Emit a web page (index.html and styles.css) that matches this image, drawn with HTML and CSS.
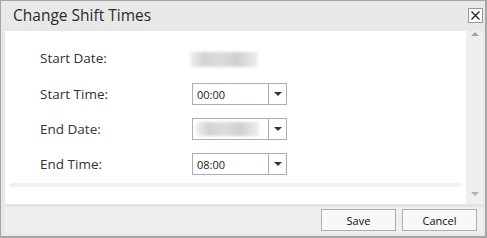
FILE: index.html
```html
<!DOCTYPE html>
<html lang="en">
<head>
    <meta charset="UTF-8">
    <title>Change Shift Times</title>
    <link rel="stylesheet" href="styles.css">
</head>
<body>

<div class="dialog">
    <!-- Title bar -->
    <div class="titlebar">
        <span class="title">Change Shift Times</span>
        <button class="close-btn" title="Close">
            <svg width="11" height="11" viewBox="0 0 11 11">
                <path d="M1.5 1.5 L9.5 9.5 M9.5 1.5 L1.5 9.5" stroke="#222" stroke-width="1.3" fill="none"/>
            </svg>
        </button>
    </div>

    <!-- Scrollable body -->
    <div class="dialog-body">
        <div class="content">
            <div class="form-grid">
                <label>Start Date:</label>
                <div class="value"><span class="blurred blurred-plain"></span></div>

                <label>Start Time:</label>
                <div class="dropdown">
                    <span class="dropdown-text">00:00</span>
                    <span class="dropdown-arrow"></span>
                </div>

                <label>End Date:</label>
                <div class="dropdown">
                    <span class="dropdown-text"><span class="blurred"></span></span>
                    <span class="dropdown-arrow"></span>
                </div>

                <label>End Time:</label>
                <div class="dropdown">
                    <span class="dropdown-text">08:00</span>
                    <span class="dropdown-arrow"></span>
                </div>
            </div>
            <div class="hscroll"></div>
        </div>
        <div class="vscroll">
            <span class="arrow-up"></span>
            <span class="arrow-down"></span>
        </div>
    </div>

    <!-- Footer buttons -->
    <div class="footer">
        <button class="btn">Save</button>
        <button class="btn">Cancel</button>
    </div>
</div>

</body>
</html>
```

FILE: styles.css
```css
body {
    margin: 0;
    padding: 0;
    font-family: 'Segoe UI', 'Open Sans', sans-serif;
    color: #333;
    background: #ffffff;
}

.dialog {
    width: 487px;
    height: 238px;
    box-sizing: border-box;
    border: 1px solid #a6a6a6;
    border-right-width: 2px;
    border-bottom-width: 2px;
    background-color: #e8e8e8;
    padding: 0 2px 2px 4px;
    display: flex;
    flex-direction: column;
}

/* Title bar */
.titlebar {
    height: 30px;
    display: flex;
    align-items: center;
    justify-content: space-between;
    padding-left: 8px;
}

.title {
    font-size: 15.5px;
    color: #2b2b2b;
    margin-top: -2px;
}

.close-btn {
    width: 15px;
    height: 15px;
    padding: 0;
    border: 1px solid #9a9a9a;
    background-color: #ffffff;
    display: flex;
    align-items: center;
    justify-content: center;
    margin-top: -2px;
    cursor: pointer;
}

/* Body */
.dialog-body {
    height: 173px;
    display: flex;
}

.content {
    flex: 1;
    background-color: #ffffff;
    padding-top: 17px;
}

.form-grid {
    display: grid;
    grid-template-columns: 152px 95px;
    grid-auto-rows: 22px;
    row-gap: 13px;
    padding-left: 35px;
    align-items: center;
}

.form-grid .value {
    display: flex;
    align-items: center;
}

.form-grid label {
    font-size: 13.5px;
    color: #333;
}

.form-grid label:first-child {
    margin-top: -2px;
}

.blurred {
    display: block;
    width: 63px;
    height: 14px;
    background: linear-gradient(90deg, #f0f0f0 0%, #d3d3d3 20%, #dcdcdc 45%, #cfcfcf 70%, #eeeeee 100%);
    filter: blur(1.5px);
}

.blurred-plain {
    width: 68px;
    height: 15px;
    margin-left: -2px;
}

.dropdown {
    height: 22px;
    box-sizing: border-box;
    border: 1px solid #abadc3;
    display: flex;
    background-color: #ffffff;
}

.dropdown-text {
    flex: 1;
    font-size: 11px;
    color: #222;
    padding-left: 4px;
    display: flex;
    align-items: center;
}

.dropdown-text .blurred {
    margin-left: -1px;
}

.dropdown-arrow {
    width: 17px;
    border-left: 1px solid #abadc3;
    display: flex;
    align-items: center;
    justify-content: center;
}

.dropdown-arrow::after {
    content: "";
    border-left: 4px solid transparent;
    border-right: 4px solid transparent;
    border-top: 4px solid #333;
}

.hscroll {
    height: 4px;
    background-color: #f0f0f0;
    margin: 8px 5px 0 5px;
}

.vscroll {
    width: 17px;
    background-color: #efefef;
    position: relative;
}

.arrow-up, .arrow-down {
    position: absolute;
    left: 5px;
    width: 0;
    height: 0;
    border-left: 4px solid transparent;
    border-right: 4px solid transparent;
}

.arrow-up {
    top: 1px;
    border-bottom: 4px solid #a0a0a0;
}

.arrow-down {
    bottom: 8px;
    border-top: 4px solid #b0b0b0;
}

/* Footer */
.footer {
    flex: 1;
    border-top: 3px solid #e4e4e4;
    background-color: #efefef;
    display: flex;
    justify-content: flex-end;
    align-items: flex-start;
    gap: 6px;
    padding: 2px 6px 0 0;
}

.btn {
    width: 75px;
    height: 22px;
    border: 1px solid #adadad;
    background-color: #f8f8f8;
    font-family: 'Segoe UI', 'Open Sans', sans-serif;
    font-size: 11px;
    color: #111;
    padding: 0;
    cursor: pointer;
}
```
